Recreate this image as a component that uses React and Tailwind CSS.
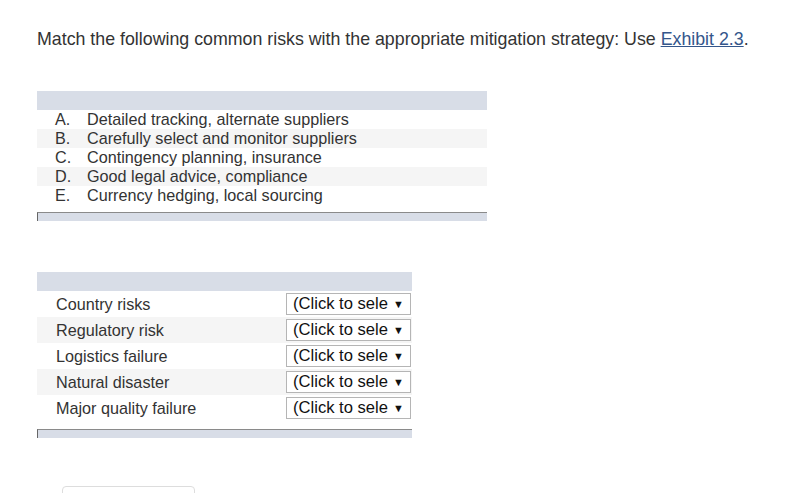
import React from "react";

const opts = [
  ["A.", "Detailed tracking, alternate suppliers"],
  ["B.", "Carefully select and monitor suppliers"],
  ["C.", "Contingency planning, insurance"],
  ["D.", "Good legal advice, compliance"],
  ["E.", "Currency hedging, local sourcing"],
];

const risks = [
  "Country risks",
  "Regulatory risk",
  "Logistics failure",
  "Natural disaster",
  "Major quality failure",
];

export default function App() {
  return (
    <div
      className="w-[810px] h-[493px] overflow-hidden bg-white text-[#333] text-[16.2px]"
      style={{ fontFamily: '"Liberation Sans", Arial, sans-serif' }}
    >
      <div className="pl-[37px] pt-[27px]">
        <p className="leading-[24px] text-[17.8px]">
          Match the following common risks with the appropriate mitigation strategy: Use{" "}
          <span className="text-[#34568b] underline">Exhibit 2.3</span>.
        </p>

        <div className="mt-[40px] w-[450px]">
          <div className="h-[19px] bg-[#d8dde7]" />
          {opts.map(([l, t], i) => (
            <div
              key={l}
              className={`flex h-[19px] leading-[19px] pl-[18px] ${i % 2 === 1 ? "bg-[#f5f5f5]" : "bg-white"}`}
            >
              <span className="w-[32px]">{l}</span>
              <span>{t}</span>
            </div>
          ))}
          <div className="mt-[7px] h-[9px] bg-[#d8dde7] border-t border-t-[#8a8a8a] border-l border-l-[#666]" />
        </div>

        <div className="mt-[51px] w-[375px]">
          <div className="h-[19px] bg-[#d8dde7]" />
          {risks.map((r, i) => (
            <div
              key={r}
              className={`flex items-center justify-between h-[26px] pl-[19px] pr-[1px] ${i % 2 === 1 ? "bg-[#f5f5f5]" : "bg-white"}`}
            >
              <span>{r}</span>
              <div className="flex items-center justify-between w-[125px] h-[22px] border border-[#b5b5b5] bg-white pl-[6px] pr-[6px] text-[#111] text-[16.6px]">
                <span className="whitespace-nowrap">(Click to sele</span>
                <span className="text-[11px]">▼</span>
              </div>
            </div>
          ))}
          <div className="mt-[8px] h-[9px] bg-[#d8dde7] border-t border-t-[#8a8a8a] border-l border-l-[#666]" />
        </div>

        <div className="ml-[25px] mt-[48px] w-[133px] h-[20px] border border-[#ddd] rounded-[4px]" />
      </div>
    </div>
  );
}
